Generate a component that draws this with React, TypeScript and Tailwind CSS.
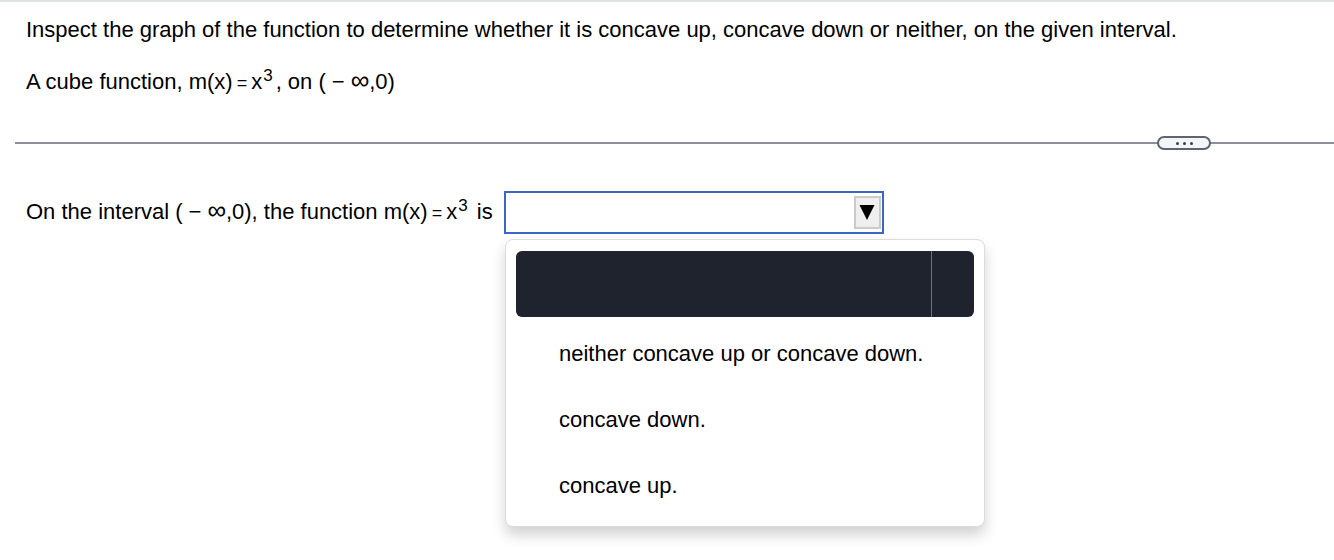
import React from 'react';

const Sup3 = () => <span className="relative -top-[8px] ml-[1px] mr-[3px] text-[17px] leading-none">3</span>;

const Fn = () => (
  <span>
    m(x)<span className="mx-[4px] text-[18px]">=</span>x
    <Sup3 />
  </span>
);

const Interval = () => (
  <span>
    (<span className="mx-[6px]">−</span>
    <span className="text-[26px] leading-none">∞</span>,0)
  </span>
);

const options = ['neither concave up or concave down.', 'concave down.', 'concave up.'];

export default function App() {
  return (
    <div className="min-h-[560px] w-[1334px] bg-white text-[22px] text-black border-t-2 border-[#dfe2e8]" style={{ fontFamily: '"Liberation Sans", Arial, sans-serif' }}>
      <div className="pl-[26px] pt-[13px]">
        <p className="h-[30px] leading-[30px]">
          Inspect the graph of the function to determine whether it is concave up, concave down or neither, on the given interval.
        </p>
        <p className="mt-[22px] h-[30px] leading-[30px]">
          A cube function, <Fn />, on <Interval />
        </p>
      </div>

      <div className="relative mt-[39px] ml-[15px] h-[14px] flex items-center">
        <div className="h-[2px] w-full bg-[#8b909a]" />
        <div className="absolute left-[1142px] top-0 flex h-[14px] w-[54px] items-center justify-center gap-[4px] rounded-full border-2 border-[#5d6571] bg-[#f3f5f8]">
          <span className="h-[3px] w-[3px] rounded-full bg-[#3a404a]" />
          <span className="h-[3px] w-[3px] rounded-full bg-[#3a404a]" />
          <span className="h-[3px] w-[3px] rounded-full bg-[#3a404a]" />
        </div>
      </div>

      <div className="relative mt-[41px] flex items-center pl-[26px]">
        <span className="leading-[30px]">
          On the interval <Interval />, the function <Fn /> is
        </span>
        <div className="ml-[11px] flex h-[43px] w-[380px] items-center justify-end border-2 border-[#3b66c4] pr-[1px]">
          <div className="flex h-[33px] w-[27px] items-center justify-center border-2 border-[#cbcbcb] bg-[#efefef]">
            <svg width="16" height="17" viewBox="0 0 16 17">
              <polygon points="0.5,1 15.5,1 8,16" fill="#000" />
            </svg>
          </div>
        </div>

        <div className="absolute left-[505px] top-[48px] w-[480px] rounded-[8px] border border-[#dcdcdc] bg-white px-[10px] pt-[11px] pb-[11px] shadow-[0_8px_14px_rgba(0,0,0,0.18)]">
          <div className="flex h-[66px] rounded-[6px] bg-[#1f232e]">
            <div className="flex-1 border-r border-[#6b707a]" />
            <div className="w-[42px]" />
          </div>
          {options.map((o) => (
            <div key={o} className="flex h-[66px] items-center pl-[43px] pt-[7px] leading-none">
              {o}
            </div>
          ))}
        </div>
      </div>
    </div>
  );
}
